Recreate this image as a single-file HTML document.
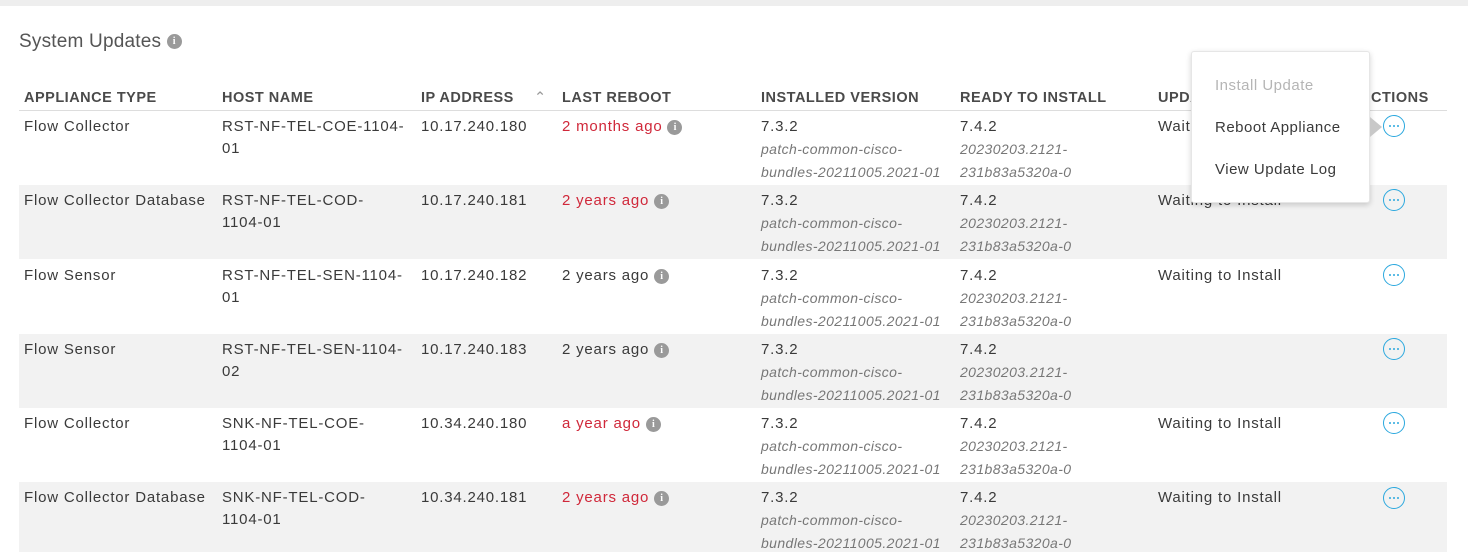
<!DOCTYPE html>
<html><head><meta charset="utf-8"><style>
*{margin:0;padding:0;box-sizing:border-box}
body{width:1468px;height:552px;background:#fff;position:relative;overflow:hidden;font-family:"Liberation Sans",sans-serif;color:#3a3a3a}
.topbar{position:absolute;left:0;top:0;width:1468px;height:6px;background:#eeeeee}
.title{position:absolute;left:19px;top:31px;font-size:19px;color:#555;letter-spacing:0.2px}
.info{display:inline-block;width:15px;height:15px;border-radius:50%;background:#9a9a9a;color:#fff;font-size:10px;font-weight:bold;text-align:center;line-height:15px;vertical-align:middle;font-family:"Liberation Serif",serif;letter-spacing:0}
.hdr{position:absolute;top:90px;font-size:14.5px;font-weight:bold;color:#4a4a4a;letter-spacing:0.5px;white-space:nowrap}
.hline{position:absolute;left:19px;top:110px;width:1428px;height:1px;background:#ddd}
.row{position:absolute;left:19px;width:1428px}
.g{background:#f2f2f2}
.c{position:absolute;font-size:15px;line-height:22px;white-space:nowrap;color:#3a3a3a;letter-spacing:0.8px}
.s{font-size:14px;font-style:italic;color:#777;letter-spacing:0.4px}
.red{color:#d0283a}
.act{position:absolute;width:22px;height:22px;border:1.5px solid #2ba8de;border-radius:50%}
.act i{position:absolute;top:9px;width:2px;height:2px;border-radius:50%;background:#2ba8de}
.menu{position:absolute;left:1191px;top:51px;width:179px;height:152px;background:#fff;border:1px solid #e6e6e6;border-radius:3px;box-shadow:0 2px 6px rgba(0,0,0,.18)}
.mi{position:absolute;left:23px;font-size:15px;color:#3a3a3a;letter-spacing:0.5px}
</style></head><body>
<div class="topbar"></div>
<div class="title">System Updates <span class="info">i</span></div>
<div class="hdr" style="left:24px">APPLIANCE TYPE</div>
<div class="hdr" style="left:222px">HOST NAME</div>
<div class="hdr" style="left:421px">IP ADDRESS</div>
<div class="hdr" style="left:534px;font-weight:normal;color:#999">&#8963;</div>
<div class="hdr" style="left:562px">LAST REBOOT</div>
<div class="hdr" style="left:761px">INSTALLED VERSION</div>
<div class="hdr" style="left:960px">READY TO INSTALL</div>
<div class="hdr" style="left:1158px">UPDATE STATUS</div>
<div class="hdr" style="left:1360px">ACTIONS</div>
<div class="hline"></div>

<div class="row" style="top:111px;height:74px"></div>
<div class="row g" style="top:185px;height:74px"></div>
<div class="row" style="top:259px;height:75px"></div>
<div class="row g" style="top:334px;height:74px"></div>
<div class="row" style="top:408px;height:74px"></div>
<div class="row g" style="top:482px;height:70px"></div>

<div class="c" style="left:24px;top:116px">Flow Collector</div>
<div class="c" style="left:222px;top:116px">RST-NF-TEL-COE-1104-<br>01</div>
<div class="c" style="left:421px;top:116px">10.17.240.180</div>
<div class="c red" style="left:562px;top:116px">2 months ago <span class="info">i</span></div>
<div class="c" style="left:761px;top:116px">7.3.2<br><span class="s">patch-common-cisco-<br>bundles-20211005.2021-01</span></div>
<div class="c" style="left:960px;top:116px">7.4.2<br><span class="s">20230203.2121-<br>231b83a5320a-0</span></div>
<div class="c" style="left:1158px;top:116px">Waiting to Install</div>
<div class="act" style="left:1383px;top:115px"><i style="left:5px"></i><i style="left:9px"></i><i style="left:13px"></i></div>

<div class="c" style="left:24px;top:190px">Flow Collector Database</div>
<div class="c" style="left:222px;top:190px">RST-NF-TEL-COD-<br>1104-01</div>
<div class="c" style="left:421px;top:190px">10.17.240.181</div>
<div class="c red" style="left:562px;top:190px">2 years ago <span class="info">i</span></div>
<div class="c" style="left:761px;top:190px">7.3.2<br><span class="s">patch-common-cisco-<br>bundles-20211005.2021-01</span></div>
<div class="c" style="left:960px;top:190px">7.4.2<br><span class="s">20230203.2121-<br>231b83a5320a-0</span></div>
<div class="c" style="left:1158px;top:190px">Waiting to Install</div>
<div class="act" style="left:1383px;top:189px"><i style="left:5px"></i><i style="left:9px"></i><i style="left:13px"></i></div>

<div class="c" style="left:24px;top:265px">Flow Sensor</div>
<div class="c" style="left:222px;top:265px">RST-NF-TEL-SEN-1104-<br>01</div>
<div class="c" style="left:421px;top:265px">10.17.240.182</div>
<div class="c" style="left:562px;top:265px">2 years ago <span class="info">i</span></div>
<div class="c" style="left:761px;top:265px">7.3.2<br><span class="s">patch-common-cisco-<br>bundles-20211005.2021-01</span></div>
<div class="c" style="left:960px;top:265px">7.4.2<br><span class="s">20230203.2121-<br>231b83a5320a-0</span></div>
<div class="c" style="left:1158px;top:265px">Waiting to Install</div>
<div class="act" style="left:1383px;top:264px"><i style="left:5px"></i><i style="left:9px"></i><i style="left:13px"></i></div>

<div class="c" style="left:24px;top:339px">Flow Sensor</div>
<div class="c" style="left:222px;top:339px">RST-NF-TEL-SEN-1104-<br>02</div>
<div class="c" style="left:421px;top:339px">10.17.240.183</div>
<div class="c" style="left:562px;top:339px">2 years ago <span class="info">i</span></div>
<div class="c" style="left:761px;top:339px">7.3.2<br><span class="s">patch-common-cisco-<br>bundles-20211005.2021-01</span></div>
<div class="c" style="left:960px;top:339px">7.4.2<br><span class="s">20230203.2121-<br>231b83a5320a-0</span></div>
<div class="act" style="left:1383px;top:338px"><i style="left:5px"></i><i style="left:9px"></i><i style="left:13px"></i></div>

<div class="c" style="left:24px;top:413px">Flow Collector</div>
<div class="c" style="left:222px;top:413px">SNK-NF-TEL-COE-<br>1104-01</div>
<div class="c" style="left:421px;top:413px">10.34.240.180</div>
<div class="c red" style="left:562px;top:413px">a year ago <span class="info">i</span></div>
<div class="c" style="left:761px;top:413px">7.3.2<br><span class="s">patch-common-cisco-<br>bundles-20211005.2021-01</span></div>
<div class="c" style="left:960px;top:413px">7.4.2<br><span class="s">20230203.2121-<br>231b83a5320a-0</span></div>
<div class="c" style="left:1158px;top:413px">Waiting to Install</div>
<div class="act" style="left:1383px;top:412px"><i style="left:5px"></i><i style="left:9px"></i><i style="left:13px"></i></div>

<div class="c" style="left:24px;top:487px">Flow Collector Database</div>
<div class="c" style="left:222px;top:487px">SNK-NF-TEL-COD-<br>1104-01</div>
<div class="c" style="left:421px;top:487px">10.34.240.181</div>
<div class="c red" style="left:562px;top:487px">2 years ago <span class="info">i</span></div>
<div class="c" style="left:761px;top:487px">7.3.2<br><span class="s">patch-common-cisco-<br>bundles-20211005.2021-01</span></div>
<div class="c" style="left:960px;top:487px">7.4.2<br><span class="s">20230203.2121-<br>231b83a5320a-0</span></div>
<div class="c" style="left:1158px;top:487px">Waiting to Install</div>
<div class="act" style="left:1383px;top:487px"><i style="left:5px"></i><i style="left:9px"></i><i style="left:13px"></i></div>

<div class="menu">
  <div class="mi" style="top:25px;color:#b5b5b5">Install Update</div>
  <div class="mi" style="top:67px">Reboot Appliance</div>
  <div class="mi" style="top:109px">View Update Log</div>
</div>
<svg style="position:absolute;left:1370px;top:117px" width="14" height="20"><polygon points="0,0 12,10 0,20" fill="#c8c8c8"/></svg>
</body></html>
